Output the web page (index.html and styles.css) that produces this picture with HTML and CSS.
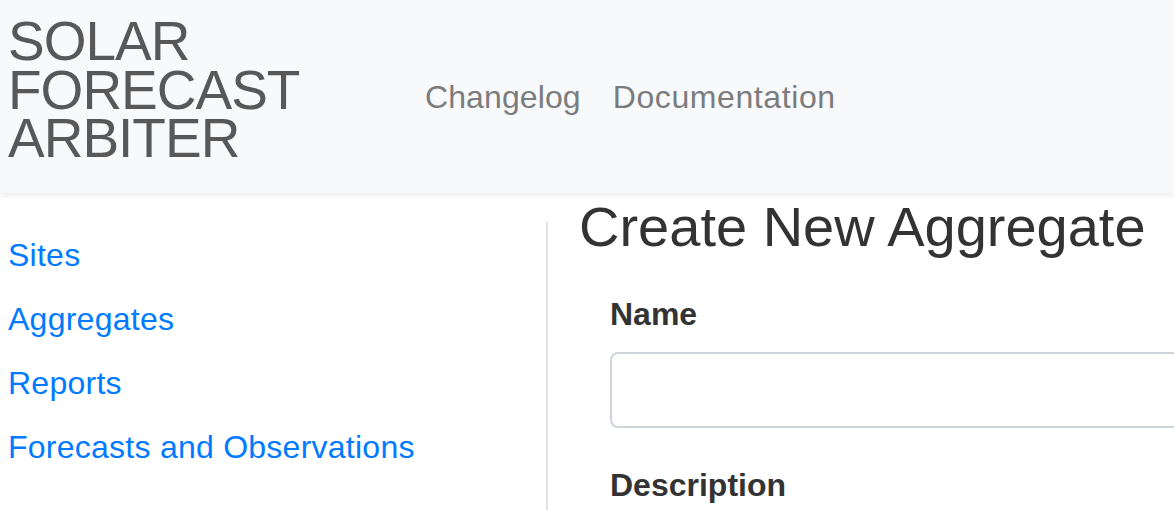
FILE: index.html
```html
<!DOCTYPE html>
<html lang="en">
<head>
<meta charset="utf-8">
<title>Create New Aggregate - Solar Forecast Arbiter</title>
<link rel="stylesheet" href="styles.css">
</head>
<body>
<header class="navbar">
  <a class="brand" href="#"><span class="brand-line">SOLAR</span><span class="brand-line">FORECAST</span><span class="brand-line">ARBITER</span></a>
  <nav class="topnav">
    <a class="topnav-link" href="#">Changelog</a>
    <a class="topnav-link" href="#">Documentation</a>
  </nav>
</header>
<div class="layout">
  <aside class="sidebar">
    <a class="side-link" href="#">Sites</a>
    <a class="side-link" href="#">Aggregates</a>
    <a class="side-link" href="#">Reports</a>
    <a class="side-link" href="#">Forecasts and Observations</a>
  </aside>
  <div class="divider"></div>
  <main class="content">
    <h1 class="page-title">Create New Aggregate</h1>
    <form class="form">
      <div class="form-group">
        <label class="form-label" for="name">Name</label>
        <input class="form-control" id="name" type="text">
      </div>
      <div class="form-group">
        <label class="form-label" for="desc">Description</label>
      </div>
    </form>
  </main>
</div>
</body>
</html>
```
FILE: styles.css
```css
* { box-sizing: border-box; }
html, body { margin: 0; padding: 0; }
body {
  font-family: "Liberation Sans", Arial, sans-serif;
  font-size: 32px;
  line-height: 48px;
  color: #212529;
  background: #fff;
  overflow: hidden;
}
a { text-decoration: none; }

.navbar {
  height: 193px;
  background: #f8f9fa;
  display: flex;
  align-items: center;
  padding-left: 8px;
  box-shadow: 0 2px 6px rgba(0, 0, 0, 0.09);
  position: relative;
  z-index: 1;
}
.brand {
  align-self: flex-start;
  margin-top: 17px;
  width: 401px;
  display: flex;
  flex-direction: column;
  font-size: 55px;
  letter-spacing: -1px;
  color: #585858;
}
.brand-line {
  display: block;
  height: 48.5px;
  line-height: 48.5px;
}
.topnav { display: flex; }
.topnav-link {
  padding: 0 16px;
  color: #7b7c7d;
  font-size: 32px;
  line-height: 48px;
  letter-spacing: 0.1px;
}
.topnav-link + .topnav-link {
  letter-spacing: 0.6px;
}

.layout {
  display: grid;
  grid-template-columns: 546px 2px 1fr;
  height: 317px;
}
.sidebar {
  display: flex;
  flex-direction: column;
  padding: 30px 0 0 8px;
}
.side-link {
  color: #007bff;
  padding: 8px 0;
  line-height: 48px;
  letter-spacing: 0.25px;
}
.divider {
  margin-top: 29px;
  background: #dfe1e3;
}
.content {
  padding-left: 31px;
}
.page-title {
  margin: 0 0 30px;
  font-size: 56px;
  font-weight: 400;
  line-height: 67px;
  color: #333;
  white-space: nowrap;
}
.form {
  padding-left: 31px;
}
.form-group { margin-bottom: 33px; }
.form-label {
  display: block;
  margin-bottom: 14px;
  font-weight: 700;
  color: #333;
  line-height: 48px;
}
.form-control {
  display: block;
  width: 600px;
  height: 76px;
  border: 2px solid #ced4da;
  border-radius: 8px;
  background: #fff;
  font: inherit;
}
```
